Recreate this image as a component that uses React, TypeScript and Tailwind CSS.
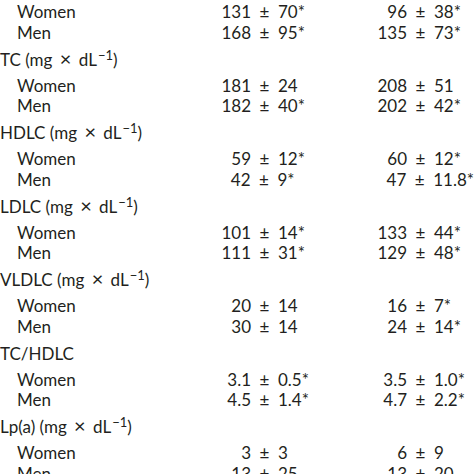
import React from "react";

type Row = [string, string, string, string];

type Group = {
  title: React.ReactNode | null;
  rows: [Row, Row];
};

const perDl = (name: string) => (
  <>
    {name} (mg <span className="mx-[3px] text-[20px] leading-[0]">×</span> dL
    <sup className="ml-[1px] text-[13px] leading-[0] -top-[6px]">−1</sup>)
  </>
);

const groups: Group[] = [
  {
    title: null,
    rows: [
      ["131", "70*", "96", "38*"],
      ["168", "95*", "135", "73*"],
    ],
  },
  {
    title: perDl("TC"),
    rows: [
      ["181", "24", "208", "51"],
      ["182", "40*", "202", "42*"],
    ],
  },
  {
    title: perDl("HDLC"),
    rows: [
      ["59", "12*", "60", "12*"],
      ["42", "9*", "47", "11.8*"],
    ],
  },
  {
    title: perDl("LDLC"),
    rows: [
      ["101", "14*", "133", "44*"],
      ["111", "31*", "129", "48*"],
    ],
  },
  {
    title: perDl("VLDLC"),
    rows: [
      ["20", "14", "16", "7*"],
      ["30", "14", "24", "14*"],
    ],
  },
  {
    title: "TC/HDLC",
    rows: [
      ["3.1", "0.5*", "3.5", "1.0*"],
      ["4.5", "1.4*", "4.7", "2.2*"],
    ],
  },
  {
    title: perDl("Lp(a)"),
    rows: [
      ["3", "3", "6", "9"],
      ["13", "25", "13", "20"],
    ],
  },
];

function ValueRow({ label, values }: { label: string; values: Row }) {
  const [a, b, c, d] = values;
  return (
    <div className="flex h-[20.5px] leading-[20.5px] whitespace-nowrap">
      <div className="w-[200px] pl-[17px]">{label}</div>
      <div className="w-[51px] text-right">{a}</div>
      <div className="w-[27px] text-center">±</div>
      <div className="w-[79px]">{b}</div>
      <div className="w-[50px] text-right">{c}</div>
      <div className="w-[27px] text-center">±</div>
      <div>{d}</div>
    </div>
  );
}

function App() {
  return (
    <div
      className="h-screen overflow-hidden bg-white pt-[2px] text-[17px] text-[#231f20]"
      style={{ fontFamily: "Lato, 'Open Sans', sans-serif" }}
    >
      {groups.map((group, i) => (
        <div key={i} className={i > 0 ? "mt-[6.5px]" : ""}>
          {group.title && (
            <div className="mb-[5.5px] h-[20.5px] leading-[20.5px] whitespace-nowrap">
              {group.title}
            </div>
          )}
          <ValueRow label="Women" values={group.rows[0]} />
          <ValueRow label="Men" values={group.rows[1]} />
        </div>
      ))}
    </div>
  );
}

export default App;
